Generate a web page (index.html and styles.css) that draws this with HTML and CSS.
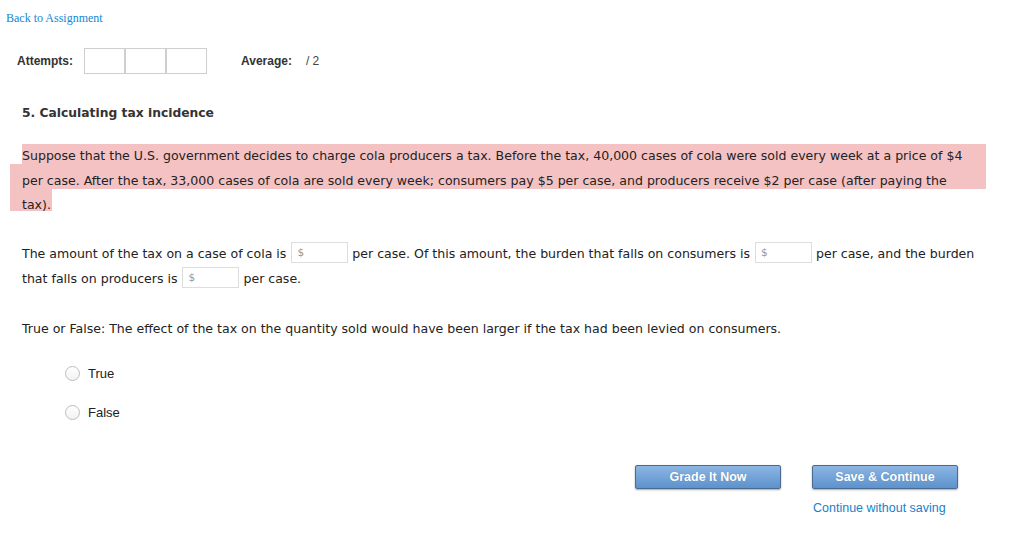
FILE: index.html
```html
<!DOCTYPE html>
<html>
<head>
<meta charset="utf-8">
<link rel="stylesheet" href="styles.css">
</head>
<body>
<div class="topbar"><a class="back" href="#">Back to Assignment</a></div>

<div class="attempts">
  <span class="lbl">Attempts:</span>
  <span class="boxes"><span class="box"></span><span class="box"></span><span class="box"></span></span>
  <span class="lbl avg">Average:</span>
  <span class="score">/ 2</span>
</div>

<div class="content">
  <h2 class="title">5. Calculating tax incidence</h2>

  <p class="scenario">Suppose that the U.S. government decides to charge cola producers a tax. Before the tax, 40,000 cases of cola were sold every week at a price of $4 per case. After the tax, 33,000 cases of cola are sold every week; consumers pay $5 per case, and producers receive $2 per case (after paying the tax).</p>

  <p class="question">The amount of the tax on a case of cola is <span class="field">$</span> per case. Of this amount, the burden that falls on consumers is <span class="field">$</span> per case, and the burden that falls on producers is <span class="field">$</span> per case.</p>

  <p class="tf">True or False: The effect of the tax on the quantity sold would have been larger if the tax had been levied on consumers.</p>

  <ul class="options">
    <li><label><input type="radio" name="tf"><span>True</span></label></li>
    <li><label><input type="radio" name="tf"><span>False</span></label></li>
  </ul>
</div>

<div class="actions">
  <button class="btn">Grade It Now</button>
  <div class="savecol">
    <button class="btn">Save &amp; Continue</button>
    <a class="skip" href="#">Continue without saving</a>
  </div>
</div>
</body>
</html>
```

FILE: styles.css
```css
html, body {
  margin: 0;
  padding: 0;
  background: #fff;
}
body {
  font-family: "DejaVu Sans", Verdana, sans-serif;
  color: #222;
  width: 1024px;
}

.topbar {
  padding: 10px 6px 0;
  height: 14px;
  line-height: 14px;
}
.back {
  font-family: "Liberation Serif", "Times New Roman", serif;
  font-size: 12px;
  color: #1287d4;
  text-decoration: none;
}

.attempts {
  display: flex;
  align-items: center;
  margin-top: 24px;
  padding-left: 17px;
  height: 26px;
}
.lbl {
  font-family: "Liberation Sans", Arial, sans-serif;
  font-weight: bold;
  font-size: 12px;
  color: #333;
}
.boxes {
  display: flex;
  margin-left: 11px;
}
.box {
  width: 39px;
  height: 24px;
  border: 1px solid #cfcfcf;
}
.avg {
  margin-left: 34px;
}
.score {
  font-family: "Liberation Sans", Arial, sans-serif;
  font-size: 12px;
  color: #444;
  margin-left: 14px;
}

.content {
  margin-left: 10px;
  width: 976px;
  padding-left: 12px;
  padding-right: 10px;
  box-sizing: border-box;
}
.title {
  font-size: 12.3px;
  font-weight: bold;
  color: #333;
  margin: 31px 0 0;
  line-height: 16px;
}

.scenario {
  position: relative;
  z-index: 0;
  margin: 23px 0 0;
  font-size: 12.55px;
  line-height: 24.5px;
}
.scenario::before {
  content: "";
  position: absolute;
  z-index: -1;
  left: -12px;
  top: 0;
  width: 976px;
  height: 67px;
  background-image:
    linear-gradient(#f5c2c4, #f5c2c4),
    linear-gradient(#f5c2c4, #f5c2c4),
    linear-gradient(#f5c2c4, #f5c2c4);
  background-repeat: no-repeat;
  background-position: 12px 0, 0 20px, 12px 45px;
  background-size: 964px 45px, 12px 47px, 30px 22px;
}

.question {
  margin: 23px 0 0;
  font-size: 12.55px;
  line-height: 25px;
}
.field {
  display: inline-block;
  box-sizing: border-box;
  width: 57px;
  height: 21px;
  border: 1px solid #ddd;
  vertical-align: middle;
  font-size: 10.5px;
  line-height: 19px;
  color: #999;
  padding-left: 5px;
  margin: -3px 0 0 1px;
}

.tf {
  margin: 25px 0 0;
  font-size: 12.55px;
  line-height: 25px;
}

.options {
  list-style: none;
  margin: 23px 0 0;
  padding: 0 0 0 43px;
}
.options li {
  height: 39px;
}
.options label {
  display: flex;
  align-items: center;
  height: 20px;
}
.options input {
  appearance: none;
  -webkit-appearance: none;
  margin: 0;
  width: 15px;
  height: 15px;
  border: 1px solid #bdbdbd;
  border-radius: 50%;
  background: linear-gradient(#fff, #f2f2f2);
  box-sizing: border-box;
}
.options span {
  font-family: "Liberation Sans", Arial, sans-serif;
  font-size: 13px;
  color: #222;
  margin-left: 8px;
}

.actions {
  display: flex;
  justify-content: flex-end;
  gap: 31px;
  margin-top: 23px;
  padding-right: 66px;
}
.savecol {
  display: flex;
  flex-direction: column;
  align-items: flex-start;
}
.btn {
  width: 146px;
  height: 24px;
  border: 1px solid #4a6a90;
  border-radius: 2px;
  background: linear-gradient(#8cb6e4, #5d92cb);
  box-shadow: 0 1px 2px rgba(0,0,0,0.35);
  color: #fff;
  font-family: "Liberation Sans", Arial, sans-serif;
  font-weight: bold;
  font-size: 12.5px;
  padding: 0;
  text-shadow: 0 0 1px rgba(40,70,110,0.4);
}
.skip {
  margin-top: 12px;
  margin-left: 1px;
  font-family: "Liberation Sans", Arial, sans-serif;
  font-size: 12.5px;
  color: #1a80c8;
  text-decoration: none;
}
```
